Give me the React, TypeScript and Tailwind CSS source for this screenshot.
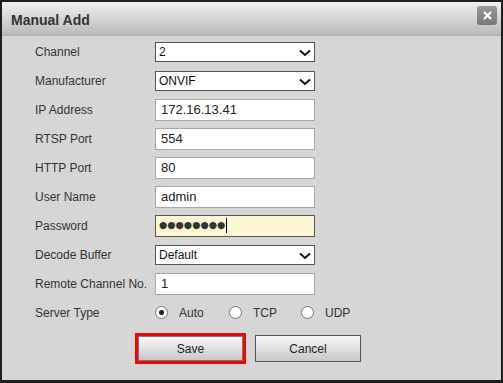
import React from "react";

const Chevron = () => (
  <svg width="12" height="8" viewBox="0 0 12 8" className="absolute right-[3px] top-[6px]">
    <path d="M1 1.5 L6 6 L11 1.5" stroke="#111" strokeWidth="2" fill="none" />
  </svg>
);

const Row = ({ label, children }: { label: string; children: React.ReactNode }) => (
  <div className="flex items-center h-[29px]">
    <div className="w-[120px] text-[12px] text-[#333]">{label}</div>
    {children}
  </div>
);

const Select = ({ value }: { value: string }) => (
  <div className="relative w-[160px] h-[20px] bg-white border border-[#555] text-[12px] text-[#111] pl-[3px] leading-[18px]">
    {value}
    <Chevron />
  </div>
);

const Input = ({ value }: { value: string }) => (
  <div className="w-[160px] h-[22px] bg-white border border-[#a8a8a8] text-[13px] text-[#222] pl-[5px] leading-[20px]">
    {value}
  </div>
);

const Radio = ({ checked }: { checked?: boolean }) => (
  <div className="w-[13px] h-[13px] rounded-full border border-[#777] bg-white flex items-center justify-center">
    {checked && <div className="w-[5px] h-[5px] rounded-full bg-[#222]" />}
  </div>
);

export default function App() {
  return (
    <div
      className="w-[503px] h-[383px] bg-[#1e1e1e] pl-[2px] pr-[2px] pt-[2px] pb-[3px]"
      style={{ fontFamily: "Arial, 'Liberation Sans', sans-serif" }}
    >
      <div className="w-full h-full bg-[#d6d6d6] flex flex-col">
        <div className="h-[34px] bg-gradient-to-b from-[#f0f0f0] to-[#bababa] flex items-start justify-between pl-[9px] pr-[4px] border-b border-[#b0b0b0]">
          <span className="text-[14px] font-bold text-[#333] mt-[8px]">Manual Add</span>
          <div className="mt-[4px] w-[20px] h-[19px] rounded-[3px] bg-gradient-to-b from-[#9a9a9a] to-[#777] flex items-center justify-center">
            <svg width="11" height="11" viewBox="0 0 11 11">
              <path d="M2 2 L9 9 M9 2 L2 9" stroke="#fff" strokeWidth="2.2" />
            </svg>
          </div>
        </div>
        <div className="pl-[33px] pt-[1px]">
          <Row label="Channel"><Select value="2" /></Row>
          <Row label="Manufacturer"><Select value="ONVIF" /></Row>
          <Row label="IP Address"><Input value="172.16.13.41" /></Row>
          <Row label="RTSP Port"><Input value="554" /></Row>
          <Row label="HTTP Port"><Input value="80" /></Row>
          <Row label="User Name"><Input value="admin" /></Row>
          <Row label="Password">
            <div className="w-[160px] h-[22px] bg-[#fdf6d2] border border-[#555] pl-[3px] flex items-center text-[#333]">
              <span className="text-[9.5px]" style={{ fontFamily: "'DejaVu Sans', sans-serif" }}>●●●●●●●●</span>
              <span className="w-[1px] h-[15px] bg-black ml-[1px]" />
            </div>
          </Row>
          <Row label="Decode Buffer"><Select value="Default" /></Row>
          <Row label="Remote Channel No."><Input value="1" /></Row>
          <Row label="Server Type">
            <div className="flex items-center text-[12px] text-[#333]">
              <Radio checked />
              <span className="ml-[11px] w-[50px]">Auto</span>
              <Radio />
              <span className="ml-[11px] w-[48px]">TCP</span>
              <Radio />
              <span className="ml-[11px]">UDP</span>
            </div>
          </Row>
        </div>
        <div className="flex pl-[133px] mt-[6px] gap-[9px]">
          <div className="border-[3px] border-[#ff0000] w-[111px] h-[31px]">
            <div className="w-full h-full bg-gradient-to-b from-[#f8f8f8] to-[#c8c8c8] border border-[#777] flex items-center justify-center text-[12px] text-[#222]">
              Save
            </div>
          </div>
          <div className="mt-[2px] w-[106px] h-[27px] bg-gradient-to-b from-[#f8f8f8] to-[#c8c8c8] border border-[#555] flex items-center justify-center text-[12px] text-[#222]">
            Cancel
          </div>
        </div>
      </div>
    </div>
  );
}
